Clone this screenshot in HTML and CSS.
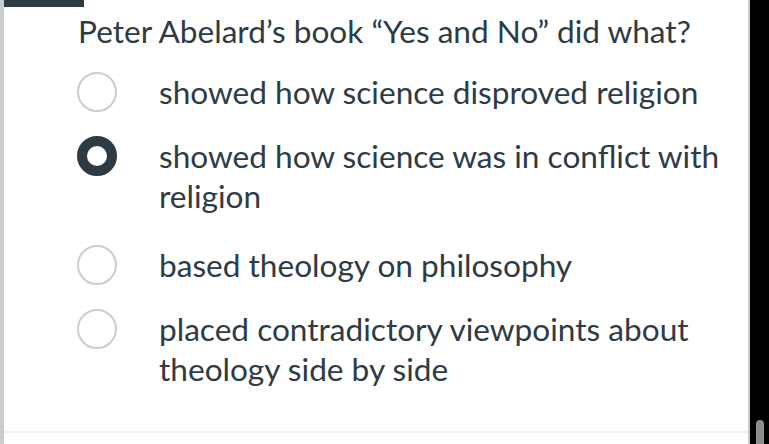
FILE: index.html
```html
<!DOCTYPE html>
<html lang="en">
<head>
<meta charset="utf-8">
<title>Quiz question</title>
<link rel="stylesheet" href="styles.css">
</head>
<body>
<div class="page">
  <div class="left-strip"></div>
  <main class="main">
    <div class="content">
      <div class="top-bar"></div>
      <p class="question">Peter Abelard’s book “Yes and No” did what?</p>
      <ul class="options">
        <li class="option"><span class="radio"></span><span class="label">showed how science disproved religion</span></li>
        <li class="option multi"><span class="radio checked"></span><span class="label">showed how science was in conflict with religion</span></li>
        <li class="option"><span class="radio"></span><span class="label">based theology on philosophy</span></li>
        <li class="option multi"><span class="radio"></span><span class="label">placed contradictory viewpoints about theology side by side</span></li>
      </ul>
    </div>
  </main>
  <div class="divider"></div>
  <div class="track"><div class="thumb"></div></div>
</div>
</body>
</html>
```
FILE: styles.css
```css
html, body {
  margin: 0;
  padding: 0;
  background: #ffffff;
}
body {
  font-family: Lato, "Noto Sans", sans-serif;
  color: #2d3b45;
  overflow: hidden;
}
.page {
  display: flex;
  width: 769px;
  height: 444px;
}
.left-strip {
  width: 4px;
  background: #c7cdd1;
  flex: none;
}
.main {
  width: 744px;
  flex: none;
  background: #fff;
}
.content {
  height: 431px;
  border-bottom: 2px solid #f1f2f3;
}
.top-bar {
  width: 80px;
  height: 7px;
  background: #2d3b45;
}
.question {
  margin: 4px 0 0 74px;
  font-size: 31.6px;
  line-height: 40px;
}
.options {
  list-style: none;
  margin: 9px 0 0 0;
  padding: 0 0 0 73px;
}
.option {
  display: flex;
  align-items: flex-start;
  padding: 12px 0 12px;
}
.option.multi {
  padding-bottom: 17px;
}
.radio {
  flex: none;
  width: 40px;
  height: 40px;
  box-sizing: border-box;
  border: 2px solid #c7cdd1;
  border-radius: 50%;
  background: #fff;
}
.radio.checked {
  border: 10px solid #2d3b45;
}
.label {
  margin-left: 42px;
  font-size: 31.6px;
  line-height: 40px;
  width: 575px;
}
.divider {
  width: 2px;
  background: #c7cdd1;
  flex: none;
}
.track {
  position: relative;
  width: 19px;
  background: #000;
  flex: none;
}
.thumb {
  position: absolute;
  left: 6px;
  top: 420px;
  width: 8px;
  height: 30px;
  border-radius: 4px;
  background: #8e8e93;
}
```
